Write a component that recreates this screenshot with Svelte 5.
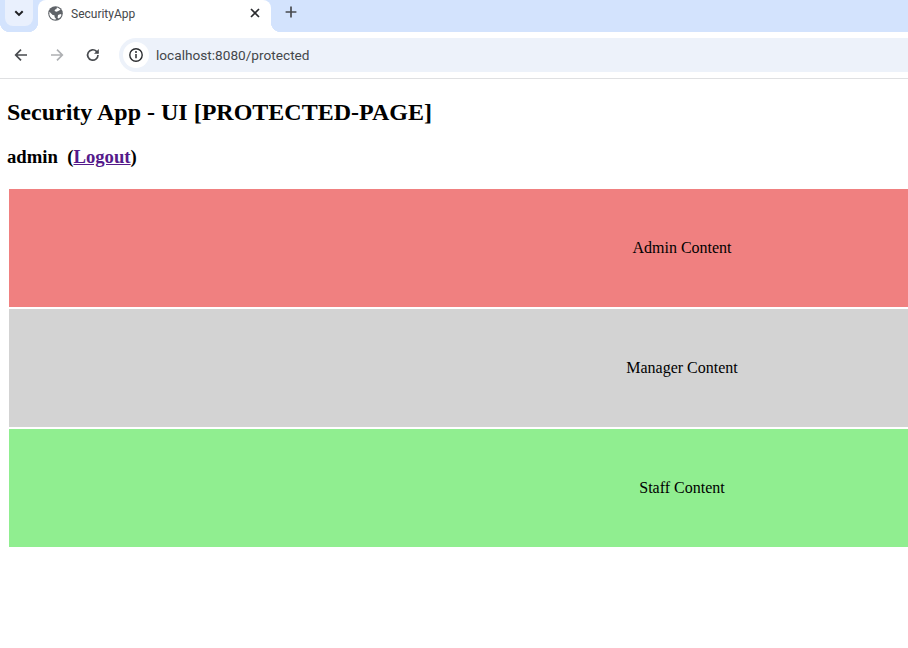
<script>
  const sections = [
    { label: 'Admin Content', tone: 'admin' },
    { label: 'Manager Content', tone: 'manager' },
    { label: 'Staff Content', tone: 'staff' }
  ];
</script>

<div class="browser">
  <div class="tabstrip">
    <div class="tab-menu">
      <svg width="12" height="12" viewBox="0 0 12 12"><path d="M2.300 4.200 6 7.900l3.700-3.700" fill="none" stroke="#1f2023" stroke-width="2"/></svg>
    </div>
    <div class="tab">
      <svg class="globe" width="15" height="15" viewBox="0 0 16 16">
        <circle cx="8" cy="8" r="7.800" fill="#5f6368"/>
        <path d="M1.500 6.200 5 9.500l1.800.3.300 2.200 1.300 1.200-.4 1.500C4.500 14.300 2 12 1.500 9.200ZM9.500 1.500c1.600.4 3 1.300 3.800 2.500L11 5.300 9 6 7 5.300l.5-1.700 1.400-.2ZM10.700 9.500l2.800-.9.900.6c-.4 1.700-1.500 3.200-3 4l-1.200-.6Z" fill="#fff"/>
      </svg>
      <span class="tab-title">SecurityApp</span>
      <svg class="close" width="10" height="10" viewBox="0 0 10 10"><path d="M1 1l8 8M9 1 1 9" stroke="#2a2b2e" stroke-width="1.700"/></svg>
    </div>
    <svg class="plus" width="12" height="12" viewBox="0 0 12 12"><path d="M6 .6v10.800M.6 6h10.800" stroke="#484b4f" stroke-width="1.700"/></svg>
  </div>

  <div class="toolbar">
    <svg class="nav" width="16" height="16" viewBox="0 0 16 16"><path d="M14 8H3M8 2.700 2.700 8 8 13.300" fill="none" stroke="#484b4f" stroke-width="1.700"/></svg>
    <svg class="nav" width="16" height="16" viewBox="0 0 16 16"><path d="M2 8h11M8 2.700 13.300 8 8 13.300" fill="none" stroke="#aeb0b3" stroke-width="1.700"/></svg>
    <svg class="nav" width="16" height="16" viewBox="0 0 16 16"><path d="M13 8a5.200 5.200 0 1 1-1.500-3.700L13 5.800" fill="none" stroke="#484b4f" stroke-width="1.700"/><path d="M13.800 2v4.800H9Z" fill="#484b4f"/></svg>
    <div class="omnibox">
      <span class="site-info">
        <svg width="16" height="16" viewBox="0 0 16 16"><circle cx="8" cy="8" r="6.200" fill="none" stroke="#2b2d30" stroke-width="1.400"/><path d="M8 7v4.300" stroke="#2b2d30" stroke-width="1.500"/><circle cx="8" cy="5" r="1" fill="#2b2d30"/></svg>
      </span>
      <span class="url">localhost:8080/protected</span>
    </div>
  </div>
</div>

<main>
  <h2>Security App - UI [PROTECTED-PAGE]</h2>
  <h3>admin&nbsp; (<a href="#logout">Logout</a>)</h3>
  <div class="grid">
    {#each sections as s}
      <div class="cell {s.tone}">{s.label}</div>
    {/each}
  </div>
</main>

<style>
  :global(body) {
    background: #fff;
    overflow: hidden;
  }

  .browser {
    font-family: Roboto, "Open Sans", sans-serif;
    border-bottom: 1px solid #dfe0e2;
  }

  .tabstrip {
    position: relative;
    display: flex;
    align-items: flex-start;
    height: 32px;
    background: #d3e3fd;
  }
  /* white corner where the strip meets the toolbar on the far left */
  .tabstrip::before {
    content: "";
    position: absolute;
    left: 0;
    bottom: 0;
    width: 10px;
    height: 10px;
    background: radial-gradient(circle at 100% 0, transparent 10px, #fff 10.500px);
  }
  .tab-menu {
    display: flex;
    align-items: center;
    justify-content: center;
    width: 28px;
    height: 26px;
    margin-left: 5px;
    background: #e9f0fd;
    border-radius: 0 0 8px 8px;
  }
  .tab {
    position: relative;
    display: flex;
    align-items: center;
    width: 233px;
    height: 32px;
    margin-left: 5px;
    padding: 0 11px 5px 10px;
    box-sizing: border-box;
    background: #fff;
    border-radius: 8px 8px 0 0;
  }
  .tab::before,
  .tab::after {
    content: "";
    position: absolute;
    bottom: 0;
    width: 10px;
    height: 10px;
  }
  .tab::before {
    left: -10px;
    background: radial-gradient(circle at 0 0, transparent 10px, #fff 10.500px);
  }
  .tab::after {
    right: -10px;
    background: radial-gradient(circle at 100% 0, transparent 10px, #fff 10.500px);
  }
  .tab-title {
    flex: 1;
    margin-left: 8px;
    font-size: 12px;
    color: #45474a;
  }
  .close { margin-top: -1px; }
  .plus { margin: 6px 0 0 14px; }

  .toolbar {
    display: flex;
    align-items: center;
    height: 46px;
    padding-left: 13px;
    background: #fff;
  }
  .nav { margin-right: 20px; flex: none; }
  .nav:nth-child(3) { margin-right: 18px; }
  .omnibox {
    display: flex;
    align-items: center;
    flex: 1;
    height: 34px;
    background: #edf2fa;
    border-radius: 17px 0 0 17px;
    padding-left: 4px;
  }
  .site-info {
    display: flex;
    align-items: center;
    justify-content: center;
    width: 26px;
    height: 26px;
    background: #fff;
    border-radius: 50%;
  }
  .url {
    margin-left: 7px;
    font-size: 13.650px;
    color: #44474a;
  }

  main {
    font-family: "Liberation Serif", "Times New Roman", serif;
    color: #000;
    padding: 0 0 0 7px;
    overflow: hidden;
  }
  h2 {
    margin: 19px 0 0;
    font-size: 24px;
    line-height: 28px;
  }
  h3 {
    margin: 20px 0 0;
    font-size: 18.700px;
    line-height: 21px;
  }
  a { color: #551a8b; }

  .grid {
    display: grid;
    gap: 2px;
    width: 1346px;
    margin: 22px 0 0 2px;
  }
  .cell {
    display: flex;
    align-items: center;
    justify-content: center;
    height: 118px;
    font-size: 16px;
  }
  .admin { background: #f08080; }
  .manager { background: #d3d3d3; }
  .staff { background: #90ee90; }
</style>
